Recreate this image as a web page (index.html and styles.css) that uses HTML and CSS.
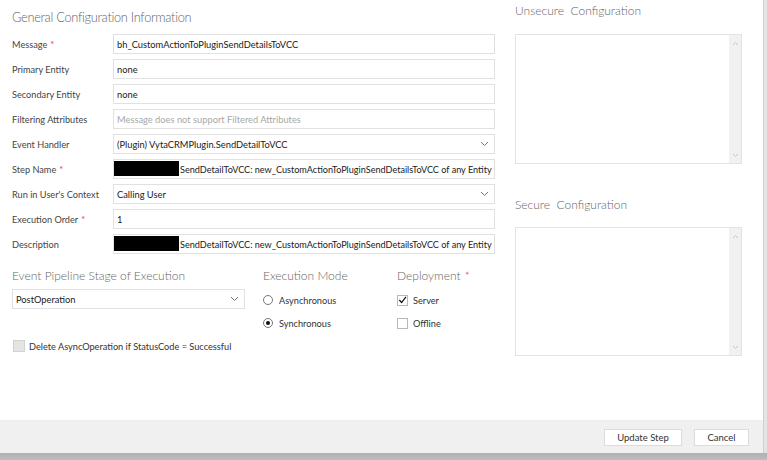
FILE: index.html
```html
<!DOCTYPE html>
<html>
<head>
<meta charset="utf-8">
<link rel="stylesheet" href="styles.css">
</head>
<body>
<div class="page">
  <div class="top">
    <div class="dialog">
      <div class="content">
        <div class="left">
          <div class="title">General Configuration Information</div>
          <div class="form">
            <div class="label">Message <span class="req">*</span></div>
            <div class="field">bh_CustomActionToPluginSendDetailsToVCC</div>

            <div class="label">Primary Entity</div>
            <div class="field">none</div>

            <div class="label">Secondary Entity</div>
            <div class="field">none</div>

            <div class="label">Filtering Attributes</div>
            <div class="field placeholder">Message does not support Filtered Attributes</div>

            <div class="label">Event Handler</div>
            <div class="field select"><span>(Plugin) VytaCRMPlugin.SendDetailToVCC</span>
              <svg class="chev" width="9" height="6" viewBox="0 0 9 6"><polyline points="1,1 4.5,4.5 8,1" fill="none" stroke="#777" stroke-width="1"/></svg></div>

            <div class="label">Step Name <span class="req">*</span></div>
            <div class="field redacted"><span class="black"></span><span>SendDetailToVCC: new_CustomActionToPluginSendDetailsToVCC of any Entity</span></div>

            <div class="label">Run in User's Context</div>
            <div class="field select"><span>Calling User</span>
              <svg class="chev" width="9" height="6" viewBox="0 0 9 6"><polyline points="1,1 4.5,4.5 8,1" fill="none" stroke="#777" stroke-width="1"/></svg></div>

            <div class="label">Execution Order <span class="req">*</span></div>
            <div class="field">1</div>

            <div class="label">Description</div>
            <div class="field redacted"><span class="black"></span><span>SendDetailToVCC: new_CustomActionToPluginSendDetailsToVCC of any Entity</span></div>
          </div>

          <div class="options">
            <div class="col col-stage">
              <div class="subtitle">Event Pipeline Stage of Execution</div>
              <div class="field select"><span>PostOperation</span>
                <svg class="chev" width="9" height="6" viewBox="0 0 9 6"><polyline points="1,1 4.5,4.5 8,1" fill="none" stroke="#777" stroke-width="1"/></svg></div>
            </div>
            <div class="col col-mode">
              <div class="subtitle">Execution Mode</div>
              <div class="opt"><span class="radio"></span>Asynchronous</div>
              <div class="opt"><span class="radio on"></span>Synchronous</div>
            </div>
            <div class="col col-deploy">
              <div class="subtitle">Deployment<span class="req">*</span></div>
              <div class="opt"><span class="check on"><svg width="10" height="10" viewBox="0 0 10 10"><polyline points="1.5,5 4,7.8 8.8,1.5" fill="none" stroke="#111" stroke-width="1.4"/></svg></span>Server</div>
              <div class="opt"><span class="check"></span>Offline</div>
            </div>
          </div>

          <div class="delete-row"><span class="check disabled"></span>Delete AsyncOperation if StatusCode = Successful</div>
        </div>

        <div class="right">
          <div class="rtitle">Unsecure&nbsp; Configuration</div>
          <div class="textarea">
            <div class="scroll">
              <svg width="7" height="5" viewBox="0 0 7 5"><polyline points="1,4 3.5,1.5 6,4" fill="none" stroke="#c8c8c8" stroke-width="1"/></svg>
              <svg width="7" height="5" viewBox="0 0 7 5"><polyline points="1,1 3.5,3.5 6,1" fill="none" stroke="#c8c8c8" stroke-width="1"/></svg>
            </div>
          </div>
          <div class="rtitle second">Secure&nbsp; Configuration</div>
          <div class="textarea">
            <div class="scroll">
              <svg width="7" height="5" viewBox="0 0 7 5"><polyline points="1,4 3.5,1.5 6,4" fill="none" stroke="#c8c8c8" stroke-width="1"/></svg>
              <svg width="7" height="5" viewBox="0 0 7 5"><polyline points="1,1 3.5,3.5 6,1" fill="none" stroke="#c8c8c8" stroke-width="1"/></svg>
            </div>
          </div>
        </div>
      </div>
      <div class="footer">
        <button class="btn btn-update">Update Step</button>
        <button class="btn btn-cancel">Cancel</button>
      </div>
    </div>
    <div class="side"></div>
  </div>
  <div class="bottom"></div>
</div>
</body>
</html>
```

FILE: styles.css
```css
html, body {
  margin: 0;
  padding: 0;
}
body {
  width: 767px;
  height: 460px;
  overflow: hidden;
  font-family: "Segoe UI", Lato, "Open Sans", sans-serif;
  color: #222;
  background: #b9b9b9;
}
.page {
  display: flex;
  flex-direction: column;
  width: 767px;
  height: 460px;
}
.top {
  display: flex;
  height: 453px;
}
.dialog {
  width: 763px;
  height: 453px;
  background: #fff;
  display: flex;
  flex-direction: column;
}
.side {
  flex: 1;
  background: #e4e4e4;
  border-left: 1px solid #d0d0d0;
}
.bottom {
  flex: 1;
  background: linear-gradient(#b0b0b0, #bdbdbd);
}
.content {
  height: 418px;
  display: flex;
  gap: 20px;
  padding: 2px 21px 0 12px;
}
.left {
  width: 483px;
  padding-top: 6px;
}
.title {
  font-size: 12.8px;
  font-weight: 300;
  letter-spacing: -0.3px;
  color: #666;
  line-height: 18px;
  height: 18px;
  margin-bottom: 8px;
}
.form {
  display: grid;
  grid-template-columns: 101px 382px;
  grid-auto-rows: 20px;
  row-gap: 5px;
}
.label {
  font-size: 9.2px;
  color: #444;
  display: flex;
  align-items: center;
  white-space: nowrap;
}
.req {
  color: #e23c3c;
  margin-left: 3px;
}
.field {
  border: 1px solid #e1e1e1;
  height: 20px;
  box-sizing: border-box;
  font-size: 9.3px;
  color: #1a1a1a;
  display: flex;
  align-items: center;
  padding-left: 3px;
  white-space: nowrap;
  overflow: hidden;
}
.field.placeholder {
  color: #a8a8a8;
}
.field.select {
  justify-content: space-between;
  padding-right: 5px;
}
.chev {
  flex: none;
}
.field.redacted {
  padding-left: 0;
  font-size: 9.1px;
}
.black {
  display: inline-block;
  width: 65px;
  height: 15px;
  background: #000;
  margin-right: 1px;
  flex: none;
  align-self: flex-start;
  margin-top: 1px;
}
.options {
  display: flex;
  margin-top: 13px;
}
.subtitle {
  font-size: 12px;
  font-weight: 300;
  color: #666;
  line-height: 17px;
  height: 17px;
  margin-bottom: 5px;
  white-space: nowrap;
}
.subtitle .req {
  margin-left: 4px;
}
.col-stage {
  width: 233px;
  margin-right: 18px;
}
.col-mode {
  width: 134px;
}
.col-deploy {
  width: 98px;
}
.opt {
  display: flex;
  align-items: center;
  font-size: 9.2px;
  color: #333;
  height: 12px;
  margin-top: 10px;
}
.opt + .opt {
  margin-top: 11px;
}
.radio {
  width: 10px;
  height: 10px;
  box-sizing: border-box;
  border: 1px solid #777;
  border-radius: 50%;
  margin-right: 6px;
  display: flex;
  align-items: center;
  justify-content: center;
}
.radio.on::after {
  content: "";
  width: 4px;
  height: 4px;
  border-radius: 50%;
  background: #111;
}
.check {
  width: 11px;
  height: 11px;
  box-sizing: border-box;
  border: 1px solid #b9b9b9;
  margin-right: 5px;
  display: flex;
  align-items: center;
  justify-content: center;
  flex: none;
}
.check.disabled {
  width: 12px;
  height: 12px;
  background: #e4e4e4;
  border-color: #d2d2d2;
  margin-right: 4px;
}
.delete-row {
  display: flex;
  align-items: center;
  font-size: 9.2px;
  color: #333;
  margin-top: 11px;
  padding-left: 1px;
}
.right {
  width: 227px;
}
.rtitle {
  font-size: 12px;
  font-weight: 300;
  color: #666;
  line-height: 17px;
  height: 17px;
  white-space: nowrap;
}
.rtitle.second {
  margin-top: 32px;
}
.textarea {
  margin-top: 15px;
  height: 130px;
  box-sizing: border-box;
  border: 1px solid #e3e3e3;
  display: flex;
  justify-content: flex-end;
}
.rtitle.second + .textarea {
  margin-top: 14px;
  height: 129px;
}
.scroll {
  width: 12px;
  background: #f1f1f1;
  display: flex;
  flex-direction: column;
  justify-content: space-between;
  align-items: center;
  padding: 6px 0 5px;
}
.footer {
  flex: 1;
  background: #f0f0f0;
  display: flex;
  justify-content: flex-end;
  align-items: flex-start;
  gap: 12px;
  padding: 8px 14px 0 0;
  border-top: 1px solid #ececec;
}
.btn {
  height: 17px;
  box-sizing: border-box;
  background: #fff;
  border: 1px solid #dcdcdc;
  font-family: "Segoe UI", Lato, "Open Sans", sans-serif;
  font-size: 9.5px;
  color: #333;
  padding: 0;
  display: flex;
  align-items: center;
  justify-content: center;
}
.btn-update {
  width: 78px;
}
.btn-cancel {
  width: 55px;
}
```
